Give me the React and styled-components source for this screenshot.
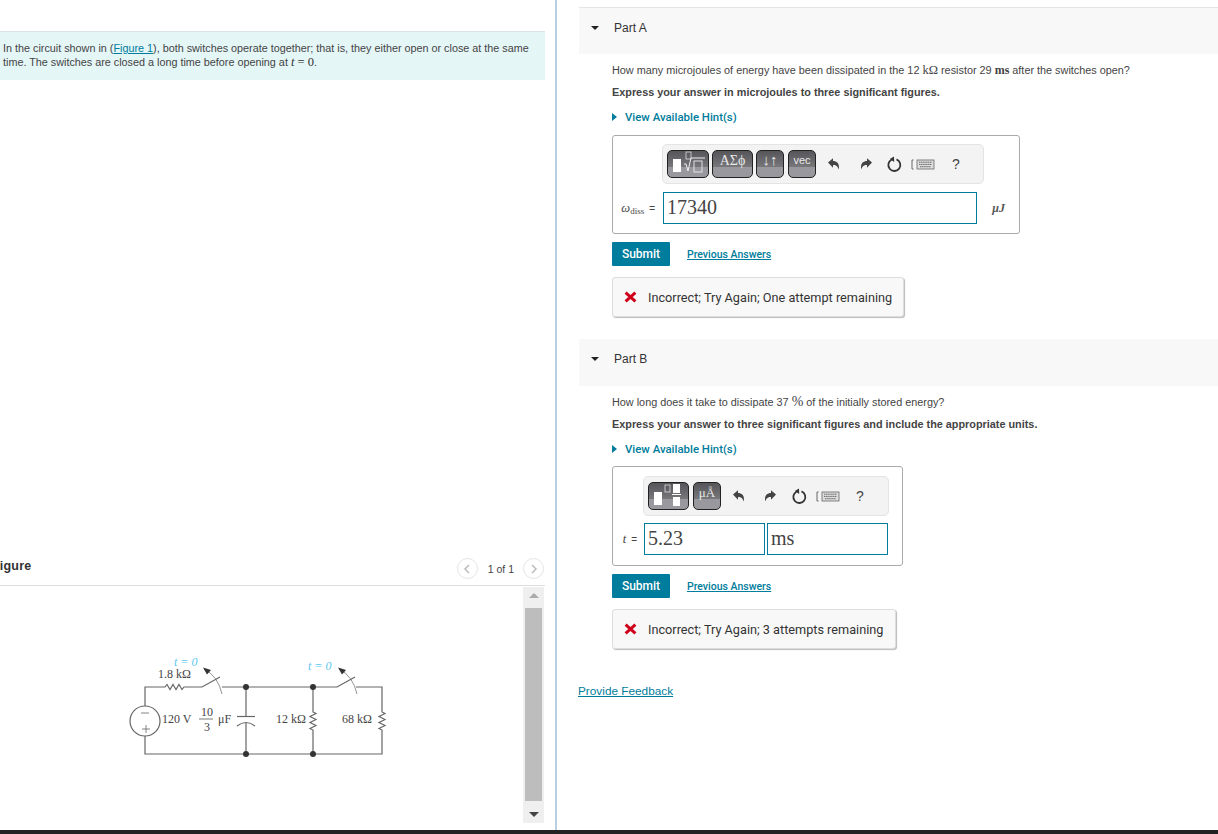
import React from "react";
import styled, { createGlobalStyle } from "styled-components";

const Global = createGlobalStyle`
  html, body { margin: 0; padding: 0; background: #fff; }
  body { font-family: "Liberation Sans", Arial, sans-serif; color: #333; overflow: hidden; }
  a { color: #007c9c; }
`;
const Page = styled.div`
  width: 1218px; height: 834px; display: flex; flex-direction: column; overflow: hidden;
`;
const Columns = styled.div`
  flex: 0 0 830px; display: flex; min-height: 0;
`;
const BottomBar = styled.div`
  flex: 0 0 4px; background: #222;
`;
const Left = styled.div`
  flex: 0 0 555px; height: 100%; display: flex; flex-direction: column; padding-top: 31px; box-sizing: border-box;
`;
const Divider = styled.div`
  flex: 0 0 2px; background: #b9cfe2;
`;
const Right = styled.div`
  flex: 1; min-width: 0; padding: 7px 0 0 22px; box-sizing: border-box;
`;
const Intro = styled.div`
  width: 545px; height: 49px; box-sizing: border-box; padding: 9px 3px 0;
  background: #e5f6f7; border-top: 1px solid #d8e4e6;
  font-size: 10.8px; line-height: 14px; color: #444;
  .m { font-family: "Liberation Serif", serif; font-size: 12.5px; color: #333; }
`;
const FigureHead = styled.div`
  margin-top: 476px; height: 30px; margin-right: 10px; box-sizing: border-box;
  display: flex; align-items: center; border-bottom: 1px solid #ddd; padding-bottom: 10px;
  overflow: hidden;
`;
const FigureTitle = styled.div`
  font-size: 12.5px; font-weight: 700; color: #333; margin-left: -8px; flex: 1; letter-spacing: .2px;
`;
const Pager = styled.div`
  display: flex; align-items: center; font-size: 10.5px; color: #444; margin-top: 6px; margin-right: 1px;
`;
const PageBtn = styled.div`
  width: 21px; height: 21px; box-sizing: border-box; border: 1px solid #e4e4e4; border-radius: 50%;
  display: flex; align-items: center; justify-content: center; margin: ${p => p.$m};
`;
const FigureBody = styled.div`
  display: flex; flex: 1; min-height: 0; justify-content: space-between; padding: 1px 11px 7px 0;
`;
const Circuit = styled.svg`
  margin: 67px 0 0 125px; flex: none;
`;
const Scrollbar = styled.div`
  width: 21px; height: 236px; background: #efefef; display: flex; flex-direction: column; align-items: center;
  justify-content: space-between; padding: 6px 0; box-sizing: border-box;
`;
const Thumb = styled.div`
  width: 17px; height: 193px; background: #bdbdbd; margin-top: -1px;
`;
const Arrow = styled.div`
  width: 0; height: 0; border-left: 5px solid transparent; border-right: 5px solid transparent;
  ${p => p.$up ? "border-bottom: 5px solid #aaa;" : "border-top: 5px solid #444;"}
`;
const PartHead = styled.div`
  height: 47px; background: #f8f8f8; display: flex; align-items: center; padding-bottom: 7px;
  border-top: ${p => p.$line ? "1px solid #e4e4e4" : "none"}; box-sizing: border-box; font-size: 12px; color: #333;
`;
const Caret = styled.span`
  width: 0; height: 0; border-left: 4px solid transparent; border-right: 4px solid transparent; border-top: 4px solid #222;
  margin: 0 15px 0 12px;
`;
const PartBody = styled.div`
  padding: 9px 0 22px 33px;
`;
const Question = styled.div`
  font-size: 10.85px; line-height: 14px; color: #444; margin-bottom: 8px;
  .m { font-family: "Liberation Serif", serif; font-size: 12.5px; }
  .b { font-weight: 700; font-size: 12px; }
  .pct { font-family: "Liberation Serif", serif; font-size: 14px; }
`;
const Instruction = styled.div`
  font-size: 10.85px; line-height: 14px; font-weight: 700; color: #444; margin-bottom: 11px;
`;
const Hint = styled.div`
  font-family: Roboto, sans-serif; font-size: 11.4px; font-weight: 500; line-height: 14px; color: #007c9c; display: flex; align-items: center; margin-bottom: ${p => p.$mb}px;
`;
const HintCaret = styled.span`
  width: 0; height: 0; border-top: 4px solid transparent; border-bottom: 4px solid transparent; border-left: 5px solid #007c9c;
  margin-right: 8px;
`;
const AnswerBox = styled.div`
  width: ${p => p.$w}px; height: ${p => p.$h}px; box-sizing: border-box; border: 1px solid #aaa; border-radius: 3px;
  display: flex; flex-direction: column; padding: ${p => p.$pt}px 0 0;
`;
const Toolbar = styled.div`
  height: 40px; width: ${p => p.$w}px; margin-left: ${p => p.$ml}px; box-sizing: border-box; background: #f3f3f3; border: 1px solid #e4e4e4; border-radius: 5px;
  display: flex; align-items: center; padding: 0 4px;
`;
const ToolBtn = styled.div`
  width: ${p => p.$w}px; height: 28px; box-sizing: border-box; margin-right: ${p => p.$mr}px;
  border: 1px solid #222; border-radius: 5px; color: #e8e8e8;
  background: linear-gradient(#55555a 0, #77777a 60%, #98989e 61%, #98989e 100%);
  display: flex; align-items: flex-start; justify-content: center; overflow: hidden;
  font-family: ${p => p.$sans ? '"Liberation Sans", sans-serif' : '"Liberation Serif", serif'};
  font-size: ${p => p.$fs ?? 13}px; line-height: 19px;
  flex: none;
`;
const IconSlot = styled.div`
  width: ${p => p.$w}px; flex: none; display: flex; justify-content: center; align-items: center; font-size: 14px; color: #444;
`;
const InputRow = styled.div`
  display: flex; align-items: center; margin-top: ${p => p.$mt}px;
`;
const VarLabel = styled.div`
  width: ${p => p.$w}px; flex: none; box-sizing: border-box; font-family: "Liberation Serif", serif; font-style: italic; font-size: 12.5px; color: #444;
  text-align: right; padding-right: ${p => p.$pr}px; white-space: nowrap;
  sub { font-style: normal; font-size: 9px; vertical-align: -2px; line-height: 0; }
  .eq { font-family: "Liberation Sans", sans-serif; font-style: normal; font-size: 10px; margin-left: 5px; }
`;
const Field = styled.div`
  width: ${p => p.$w}px; height: 32px; box-sizing: border-box; border: 1px solid #007c9c; margin-right: ${p => p.$mr ?? 0}px;
  font-family: "Liberation Serif", serif; font-size: 20px; line-height: 29px; color: #444; padding-left: 3px; flex: none;
`;
const Unit = styled.div`
  flex: 1; font-family: "Liberation Serif", serif; font-style: italic; font-size: 12px; font-weight: 700; color: #555; text-align: right; padding-right: 14px;
`;
const Actions = styled.div`
  display: flex; align-items: center; margin-top: 8px;
`;
const Submit = styled.div`
  width: 58px; height: 24px; background: #007c9c; border-radius: 1px; color: #fff; font-family: Roboto, sans-serif; font-size: 12px; font-weight: 500; line-height: 24px; text-align: center;
`;
const Prev = styled.a`
  margin-left: 17px; font-family: Roboto, sans-serif; font-weight: 500; font-size: 10.5px;
`;
const Feedback = styled.div`
  margin-top: 11px; width: ${p => p.$w}px; height: 40px; box-sizing: border-box; background: #f8f8f8; border: 1px solid #ddd;
  border-radius: 3px; box-shadow: 1px 1px 1px #bbb; display: flex; align-items: center; padding-left: 11px;
  font-family: Roboto, sans-serif; font-size: 12.7px; color: #333;
  svg { margin-right: 11px; flex: none; }
`;
const Provide = styled.a`
  font-size: 11.8px; display: block; margin: 13px 0 0 -1px;
`;
const UndoSvg = styled.svg`
  transform: ${p => p.$flip ? "scaleX(-1)" : "none"};
`;

const Undo = ({ flip }) => (
  <UndoSvg $flip={flip} width="13" height="14" viewBox="0 0 13 14">
    <path d="M1 5.500 6 1.200v2.800c3.600 0 6 2.200 6 6.200 0 .8-.1 1.600-.4 2.400-.5-2.800-2-4.600-5.600-4.600v2.800z" fill="#444" />
  </UndoSvg>
);
const Reset = () => (
  <svg width="17" height="17" viewBox="0 0 17 17" fill="none">
    <path d="M10.500 3.400A6 6 0 1 1 5.500 3.700" stroke="#333" strokeWidth="1.800" />
    <path d="M8 0.500 8.200 6 3.800 3z" fill="#333" />
  </svg>
);
const Keyboard = () => (
  <svg width="24" height="11" viewBox="0 0 24 11">
    <path d="M2.500 1H1v9h1.500" fill="none" stroke="#666" strokeWidth="1" />
    <rect x="6" y="1" width="17" height="9" fill="#ddd" stroke="#666" strokeWidth=".8" />
    <path d="M8 3.200h13M8 5.400h13M9 7.700h11" stroke="#666" strokeWidth="1" strokeDasharray="1.500 .6" />
  </svg>
);
const Cross = () => (
  <svg width="13" height="12" viewBox="0 0 13 12">
    <path d="M1.600 1.600 11.400 10.400M11.400 1.600 1.600 10.400" stroke="#d0021b" strokeWidth="3" />
  </svg>
);
const Templates = () => (
  <svg width="40" height="26" viewBox="0 0 40 26">
    <rect x="5" y="8" width="8" height="13" fill="#fff" />
    <rect x="18" y="1" width="5" height="7" fill="none" stroke="#ddd" strokeWidth=".8" />
    <path d="M16 13h2l2 7 3-13h14" fill="none" stroke="#eee" strokeWidth="1" />
    <rect x="26" y="10" width="8" height="11" fill="none" stroke="#eee" strokeWidth=".9" />
  </svg>
);
const Fractions = () => (
  <svg width="39" height="26" viewBox="0 0 39 26">
    <rect x="5" y="9" width="8" height="13" fill="#fff" />
    <rect x="16" y="2" width="5" height="7" fill="none" stroke="#ddd" strokeWidth=".8" />
    <rect x="24" y="1" width="7" height="9" fill="#fff" />
    <path d="M23 11.500h9" stroke="#fff" strokeWidth="1" />
    <rect x="24" y="14" width="7" height="9" fill="#fff" />
  </svg>
);

const Wire = styled.g`
  fill: none; stroke: #666; stroke-width: 1.200;
`;
const Label = styled.text`
  font-family: "Liberation Serif", serif; font-size: 12px; fill: #444;
`;
const TLabel = styled.text`
  font-family: "Liberation Serif", serif; font-size: 12px; fill: #5cc8f0; font-style: italic;
`;

function CircuitFigure() {
  return (
    <Circuit width="264" height="110" viewBox="125 652 264 110">
      <Wire>
        <path d="M145 704V685H165l2-2.500 3 5 3-5 3 5 3-5 3 5 2-2.500H202L220 675" />
        <path d="M204 667Q218 674 222 692" strokeWidth=".7" />
        <path d="M222 685H337L355 675" />
        <path d="M339 667Q353 674 357 692" strokeWidth=".7" />
        <path d="M356 685H382V710l3 1.500-6 3 6 3-6 3 6 3-6 3 3 1.500V752H145V734" />
        <circle cx="145" cy="719" r="15" />
        <path d="M246 685V714M246 721V752" />
        <path d="M237 714.500H255" />
        <path d="M237 724Q246 717 255 724" />
        <path d="M313 685V710l3 1.500-6 3 6 3-6 3 6 3-6 3 3 1.500V752" />
        <path d="M141 711h8" strokeWidth=".8" />
        <path d="M142 727h8M146 723v8" strokeWidth=".8" />
      </Wire>
      <path d="M203 665.500 211 668 207 672.500z" fill="#333" />
      <path d="M338 665.500 346 668 342 672.500z" fill="#333" />
      <circle cx="246" cy="685" r="3" fill="#333" />
      <circle cx="313" cy="685" r="3" fill="#333" />
      <circle cx="246" cy="752" r="3" fill="#333" />
      <circle cx="313" cy="752" r="3" fill="#333" />
      <TLabel x="174" y="664">t = 0</TLabel>
      <TLabel x="308" y="668">t = 0</TLabel>
      <Label x="158" y="676">1.8 kΩ</Label>
      <Label x="162" y="721">120 V</Label>
      <Label x="201" y="714">10</Label>
      <path d="M199 717h14" stroke="#555" strokeWidth=".8" />
      <Label x="204" y="729">3</Label>
      <Label x="218" y="721">μF</Label>
      <Label x="276" y="721">12 kΩ</Label>
      <Label x="342" y="721">68 kΩ</Label>
    </Circuit>
  );
}

export default function App() {
  return (
    <Page>
      <Global />
      <Columns>
        <Left>
          <Intro>
            In the circuit shown in (<a href="#f">Figure 1</a>), both switches operate together; that is, they either open or close at the same<br />
            time. The switches are closed a long time before opening at <span className="m"><i>t</i> = 0</span>.
          </Intro>
          <FigureHead>
            <FigureTitle>Figure</FigureTitle>
            <Pager>
              <PageBtn $m="0 10px 0 0">
                <svg width="8" height="10" viewBox="0 0 8 10"><path d="M6 1 2 5l4 4" fill="none" stroke="#bbb" strokeWidth="1.500" /></svg>
              </PageBtn>
              1 of 1
              <PageBtn $m="0 0 0 9px">
                <svg width="8" height="10" viewBox="0 0 8 10"><path d="M2 1l4 4-4 4" fill="none" stroke="#bbb" strokeWidth="1.500" /></svg>
              </PageBtn>
            </Pager>
          </FigureHead>
          <FigureBody>
            <CircuitFigure />
            <Scrollbar>
              <Arrow $up />
              <Thumb />
              <Arrow />
            </Scrollbar>
          </FigureBody>
        </Left>
        <Divider />
        <Right>
          <PartHead $line><Caret />Part A</PartHead>
          <PartBody>
            <Question>How many microjoules of energy have been dissipated in the 12 <span className="m">kΩ</span> resistor 29 <span className="m b">ms</span> after the switches open?</Question>
            <Instruction>Express your answer in microjoules to three significant figures.</Instruction>
            <Hint $mb={11}><HintCaret />View Available Hint(s)</Hint>
            <AnswerBox $w={408} $h={99} $pt={8}>
              <Toolbar $w={322} $ml={49}>
                <ToolBtn $w={42} $mr={3}><Templates /></ToolBtn>
                <ToolBtn $w={41} $mr={3} $fs={14}>ΑΣϕ</ToolBtn>
                <ToolBtn $w={28} $mr={4} $fs={15}>↓↑</ToolBtn>
                <ToolBtn $w={28} $mr={0} $fs={11} $sans>vec</ToolBtn>
                <IconSlot $w={34}><Undo /></IconSlot>
                <IconSlot $w={32}><Undo flip /></IconSlot>
                <IconSlot $w={24}><Reset /></IconSlot>
                <IconSlot $w={34}><Keyboard /></IconSlot>
                <IconSlot $w={32}>?</IconSlot>
              </Toolbar>
              <InputRow $mt={8}>
                <VarLabel $w={50} $pr={8}>ω<sub>diss</sub><span className="eq">=</span></VarLabel>
                <Field $w={314}>17340</Field>
                <Unit>μJ</Unit>
              </InputRow>
            </AnswerBox>
            <Actions>
              <Submit>Submit</Submit>
              <Prev href="#p">Previous Answers</Prev>
            </Actions>
            <Feedback $w={292}><Cross />Incorrect; Try Again; One attempt remaining</Feedback>
          </PartBody>
          <PartHead><Caret />Part B</PartHead>
          <PartBody>
            <Question>How long does it take to dissipate 37 <span className="pct">%</span> of the initially stored energy?</Question>
            <Instruction>Express your answer to three significant figures and include the appropriate units.</Instruction>
            <Hint $mb={10}><HintCaret />View Available Hint(s)</Hint>
            <AnswerBox $w={291} $h={100} $pt={9}>
              <Toolbar $w={246} $ml={30}>
                <ToolBtn $w={41} $mr={4}><Fractions /></ToolBtn>
                <ToolBtn $w={28} $mr={0} $fs={13}>μÅ</ToolBtn>
                <IconSlot $w={34}><Undo /></IconSlot>
                <IconSlot $w={30}><Undo flip /></IconSlot>
                <IconSlot $w={28}><Reset /></IconSlot>
                <IconSlot $w={30}><Keyboard /></IconSlot>
                <IconSlot $w={34}>?</IconSlot>
              </Toolbar>
              <InputRow $mt={7}>
                <VarLabel $w={31} $pr={7}>t<span className="eq">=</span></VarLabel>
                <Field $w={121} $mr={2}>5.23</Field>
                <Field $w={121}>ms</Field>
              </InputRow>
            </AnswerBox>
            <Actions>
              <Submit>Submit</Submit>
              <Prev href="#p">Previous Answers</Prev>
            </Actions>
            <Feedback $w={284}><Cross />Incorrect; Try Again; 3 attempts remaining</Feedback>
          </PartBody>
          <Provide href="#fb">Provide Feedback</Provide>
        </Right>
      </Columns>
      <BottomBar />
    </Page>
  );
}
